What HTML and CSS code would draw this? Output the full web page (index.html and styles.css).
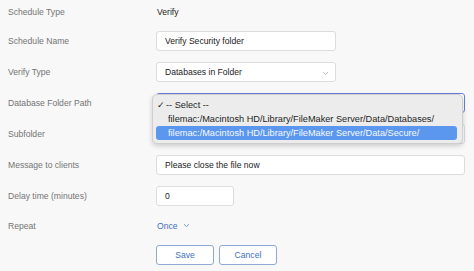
FILE: index.html
```html
<!DOCTYPE html>
<html>
<head>
<meta charset="utf-8">
<link rel="stylesheet" href="styles.css">
</head>
<body>
<div class="form">
  <div class="label">Schedule Type</div>
  <div class="value static">Verify</div>

  <div class="label">Schedule Name</div>
  <div class="value"><div class="input medium">Verify Security folder</div></div>

  <div class="label">Verify Type</div>
  <div class="value"><div class="input medium select">Databases in Folder<svg class="chev" width="7" height="5" viewBox="0 0 7 5"><path d="M1 1.2 L3.5 3.6 L6 1.2" fill="none" stroke="#b5b5b5" stroke-width="0.9"/></svg></div></div>

  <div class="label">Database Folder Path</div>
  <div class="value field-wrap">
    <div class="input wide focus"></div>
    <div class="popup">
      <div class="opt first"><span class="check">✓</span>-- Select --</div>
      <div class="opt">filemac:/Macintosh HD/Library/FileMaker Server/Data/Databases/</div>
      <div class="opt sel">filemac:/Macintosh HD/Library/FileMaker Server/Data/Secure/</div>
    </div>
  </div>

  <div class="label">Subfolder</div>
  <div class="value"><div class="input wide"></div></div>

  <div class="label">Message to clients</div>
  <div class="value"><div class="input wide">Please close the file now</div></div>

  <div class="label">Delay time (minutes)</div>
  <div class="value"><div class="input small">0</div></div>

  <div class="label">Repeat</div>
  <div class="value static"><span class="link">Once<svg class="chev2" width="7" height="5" viewBox="0 0 7 5"><path d="M1 1.2 L3.5 3.6 L6 1.2" fill="none" stroke="#6e8fc8" stroke-width="0.9"/></svg></span></div>

  <div class="label"></div>
  <div class="value buttons">
    <button class="btn">Save</button>
    <button class="btn">Cancel</button>
  </div>
</div>
</body>
</html>
```

FILE: styles.css
```css
html, body {
  margin: 0;
  padding: 0;
  background: #f8f8f8;
}
body {
  font-family: "Liberation Sans", Arial, Helvetica, sans-serif;
  font-size: 8.6px;
  color: #222;
}
.form {
  display: grid;
  grid-template-columns: 148px 1fr;
  grid-template-rows: 16px 20px 20px 20px 20px 20px 20px 17px 20px;
  row-gap: 11px;
  padding: 4px 8px 0 8px;
}
.label {
  color: #747474;
  display: flex;
  align-items: center;
}
.value {
  display: flex;
  align-items: center;
}
.static {
  padding-left: 1px;
}
.input {
  box-sizing: border-box;
  height: 20px;
  background: #fff;
  border: 1px solid #dcdcdc;
  border-radius: 3px;
  padding: 0 8px;
  display: flex;
  align-items: center;
  color: #222;
}
.medium { width: 180px; }
.wide { width: 309px; }
.small { width: 78px; }
.select {
  position: relative;
}
.chev {
  position: absolute;
  right: 6px;
  top: 8px;
}
.focus {
  border-color: #6a7fd6;
}
.field-wrap {
  position: relative;
}
.popup {
  position: absolute;
  left: -4px;
  top: 1px;
  width: 311px;
  box-sizing: border-box;
  padding: 3px 5px 3px 3px;
  background: #ececec;
  border: 1px solid #cfcfcf;
  border-radius: 5px;
  box-shadow: 0 2px 5px rgba(0,0,0,0.18);
  z-index: 5;
}
.opt {
  height: 14px;
  line-height: 14px;
  padding-left: 12px;
  font-size: 9.2px;
  color: #1e1e1e;
  position: relative;
  border-radius: 3px;
}
.check {
  position: absolute;
  left: 1px;
  top: 0;
}
.opt.first {
  padding-left: 10px;
}
.opt.sel {
  background: #5b97ee;
  color: #f7faff;
}
.link {
  color: #3f6fbf;
  display: inline-flex;
  align-items: center;
}
.chev2 {
  margin-left: 5px;
}
.buttons {
  gap: 5px;
}
.btn {
  box-sizing: border-box;
  width: 58px;
  height: 20px;
  background: #fff;
  border: 1px solid #8fa9d3;
  border-radius: 3px;
  color: #3f6fbf;
  font-family: "Liberation Sans", Arial, Helvetica, sans-serif;
  font-size: 8.6px;
  padding: 0;
}
```
